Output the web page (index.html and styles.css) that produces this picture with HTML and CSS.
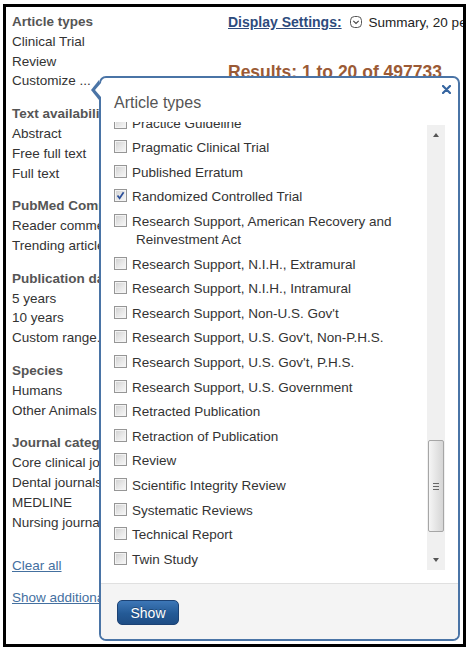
FILE: index.html
```html
<!DOCTYPE html>
<html>
<head>
<meta charset="utf-8">
<link rel="stylesheet" href="styles.css">
</head>
<body>
<div class="frame">
  <aside class="sidebar">
    <div class="group">
      <div class="h">Article types</div>
      <div>Clinical Trial</div>
      <div>Review</div>
      <div>Customize ...</div>
    </div>
    <div class="group">
      <div class="h">Text availability</div>
      <div>Abstract</div>
      <div>Free full text</div>
      <div>Full text</div>
    </div>
    <div class="group">
      <div class="h">PubMed Commons</div>
      <div>Reader comments</div>
      <div>Trending articles</div>
    </div>
    <div class="group">
      <div class="h">Publication dates</div>
      <div>5 years</div>
      <div>10 years</div>
      <div>Custom range...</div>
    </div>
    <div class="group">
      <div class="h">Species</div>
      <div>Humans</div>
      <div>Other Animals</div>
    </div>
    <div class="group">
      <div class="h">Journal categories</div>
      <div>Core clinical journals</div>
      <div>Dental journals</div>
      <div>MEDLINE</div>
      <div>Nursing journals</div>
    </div>
    <a class="link clear">Clear all</a>
    <a class="link more">Show additional filters</a>
  </aside>
  <main class="main">
    <div class="display"><a class="ds">Display Settings:</a><svg class="chev" width="12" height="12" viewBox="0 0 12 12"><rect x="0.5" y="0.5" width="11" height="11" rx="4" fill="#fff" stroke="#555"/><path d="M3.3 4.8 L6 7.4 L8.7 4.8" fill="none" stroke="#444" stroke-width="1.1"/></svg><span>Summary, 20 per page, Sorted by Recently Added</span></div>
    <div class="results">Results: 1 to 20 of 497733</div>
  </main>

  <div class="popup">
    <span class="arrow-out"></span><span class="arrow-in"></span>
    <svg class="close" width="9" height="9" viewBox="0 0 9 9"><path d="M1 1 L8 8 M8 1 L1 8" stroke="#3565a0" stroke-width="2.2" stroke-linecap="round"/></svg>
    <div class="p-head">Article types</div>
    <div class="p-body">
      <div class="list">
        <div class="items">
          <div class="item"><span class="cb"></span>Practice Guideline</div>
          <div class="item"><span class="cb"></span>Pragmatic Clinical Trial</div>
          <div class="item"><span class="cb"></span>Published Erratum</div>
          <div class="item"><span class="cb checked"><svg width="11" height="11" viewBox="0 0 11 11"><path d="M2.5 5.5 L4.6 8.2 L8.6 2.2" fill="none" stroke="#2b4f9a" stroke-width="1.7"/></svg></span>Randomized Controlled Trial</div>
          <div class="item"><span class="cb"></span>Research Support, American Recovery and Reinvestment Act</div>
          <div class="item"><span class="cb"></span>Research Support, N.I.H., Extramural</div>
          <div class="item"><span class="cb"></span>Research Support, N.I.H., Intramural</div>
          <div class="item"><span class="cb"></span>Research Support, Non-U.S. Gov't</div>
          <div class="item"><span class="cb"></span>Research Support, U.S. Gov't, Non-P.H.S.</div>
          <div class="item"><span class="cb"></span>Research Support, U.S. Gov't, P.H.S.</div>
          <div class="item"><span class="cb"></span>Research Support, U.S. Government</div>
          <div class="item"><span class="cb"></span>Retracted Publication</div>
          <div class="item"><span class="cb"></span>Retraction of Publication</div>
          <div class="item"><span class="cb"></span>Review</div>
          <div class="item"><span class="cb"></span>Scientific Integrity Review</div>
          <div class="item"><span class="cb"></span>Systematic Reviews</div>
          <div class="item"><span class="cb"></span>Technical Report</div>
          <div class="item"><span class="cb"></span>Twin Study</div>
          <div class="item"><span class="cb"></span>Validation Studies</div>
          <div class="item"><span class="cb"></span>Video-Audio Media</div>
        </div>
      </div>
      <div class="sb">
        <div class="sb-btn"><span class="tri up"></span></div>
        <div class="sb-track"><div class="sb-thumb"><span class="grip"></span></div></div>
        <div class="sb-btn"><span class="tri down"></span></div>
      </div>
    </div>
    <div class="p-foot"><button class="show">Show</button></div>
  </div>
</div>
</body>
</html>
```
FILE: styles.css
```css
* { box-sizing: border-box; }
html, body { margin: 0; padding: 0; background: #fff; }
body { font-family: "Liberation Sans", Arial, sans-serif; color: #333; }

.frame {
  position: relative;
  margin: 4px 0 0 3px;
  width: 463px;
  height: 643px;
  border: 3px solid #000;
  overflow: hidden;
  display: flex;
  background: #fff;
}

.sidebar {
  flex: 0 0 222px;
  padding: 5px 0 0 6px;
  font-size: 13.5px;
  line-height: 19.8px;
  color: #333;
  white-space: nowrap;
}
.group { margin-bottom: 13px; }
.h { font-weight: bold; color: #555; }
.link { display: block; color: #44709f; text-decoration: underline; }
.clear { margin-top: 23.5px; }
.more { margin-top: 12px; }

.main {
  flex: 1;
  padding-top: 5px;
  white-space: nowrap;
  min-width: 0;
}
.display {
  display: flex;
  align-items: center;
  height: 20px;
  font-size: 13.5px;
  color: #222;
}
.ds {
  font-size: 14px;
  font-weight: bold;
  color: #2d4b7d;
  text-decoration: underline;
}
.chev { margin: 0 7px 0 8px; flex: none; }
.results {
  margin-top: 29px;
  font-size: 17.5px;
  line-height: 22px;
  font-weight: bold;
  color: #9b5a35;
}

.popup {
  position: absolute;
  left: 93px;
  top: 69px;
  width: 361px;
  height: 565px;
  border: 2px solid #4a74a6;
  border-radius: 7px;
  background: #fff;
  display: flex;
  flex-direction: column;
}
.arrow-out, .arrow-in {
  position: absolute;
  width: 0; height: 0;
  border-style: solid;
  border-color: transparent;
}
.arrow-out {
  left: -10px; top: 2px;
  border-width: 10px 8px 10px 0;
  border-right-color: #4a74a6;
}
.arrow-in {
  left: -6px; top: 4.5px;
  border-width: 7.5px 6px 7.5px 0;
  border-right-color: #fff;
}
.close { position: absolute; top: 7px; right: 7px; }

.p-head {
  padding: 15px 13px 9px;
  font-size: 16px;
  line-height: 20px;
  color: #555;
}
.p-body {
  display: flex;
  height: 450px;
  padding: 0 13px;
  margin-bottom: 11px;
}
.list {
  flex: 1;
  overflow: hidden;
  font-size: 13.5px;
  color: #333;
}
.items { margin-top: -7.4px; }
.item {
  line-height: 18px;
  margin-bottom: 6.6px;
  padding-left: 22px;
  text-indent: -22px;
  padding-right: 8px;
}
.cb {
  display: inline-block;
  width: 13px;
  height: 13px;
  margin-right: 5px;
  vertical-align: -1px;
  border: 1px solid #969696;
  background: linear-gradient(135deg, #cfcfcf 0%, #e8e8e8 55%, #f8f8f8 100%);
  box-shadow: inset 0 0 0 1px #f3f3f3;
  text-indent: 0;
}
.cb svg { display: block; margin: 0; }

.sb {
  flex: 0 0 18px;
  height: 445px;
  margin-top: 3px;
  background: #f0f0f0;
  display: flex;
  flex-direction: column;
}
.sb-btn {
  height: 20px;
  display: flex;
  align-items: center;
  justify-content: center;
}
.tri { width: 0; height: 0; border-style: solid; border-color: transparent; }
.tri.up { border-width: 0 3.5px 4px 3.5px; border-bottom-color: #555; }
.tri.down { border-width: 4px 3.5px 0 3.5px; border-top-color: #555; }
.sb-track { flex: 1; padding-top: 295px; }
.sb-thumb {
  height: 92px;
  margin: 0 1px;
  border: 1px solid #a6a6a6;
  border-radius: 2px;
  background: linear-gradient(to right, #f5f5f5, #e2e2e2 60%, #d6d6d6);
  display: flex;
  align-items: center;
  justify-content: center;
}
.grip {
  width: 6px;
  height: 7px;
  background: linear-gradient(#666 0 1px, transparent 1px 3px, #666 3px 4px, transparent 4px 6px, #666 6px 7px);
}

.p-foot {
  flex: 1;
  border-top: 1px solid #e0e0e0;
  background: #f4f4f4;
  padding: 16px 0 0 16px;
  border-radius: 0 0 5px 5px;
}
.show {
  width: 62px;
  height: 25px;
  border: 1px solid #1c4274;
  border-radius: 5px;
  background: linear-gradient(#3d77b7, #245a96 55%, #1e4d85);
  color: #fff;
  font-family: "Liberation Sans", Arial, sans-serif;
  font-size: 14px;
  padding: 0;
  text-shadow: 0 -1px 0 rgba(0,0,0,0.3);
}
```
